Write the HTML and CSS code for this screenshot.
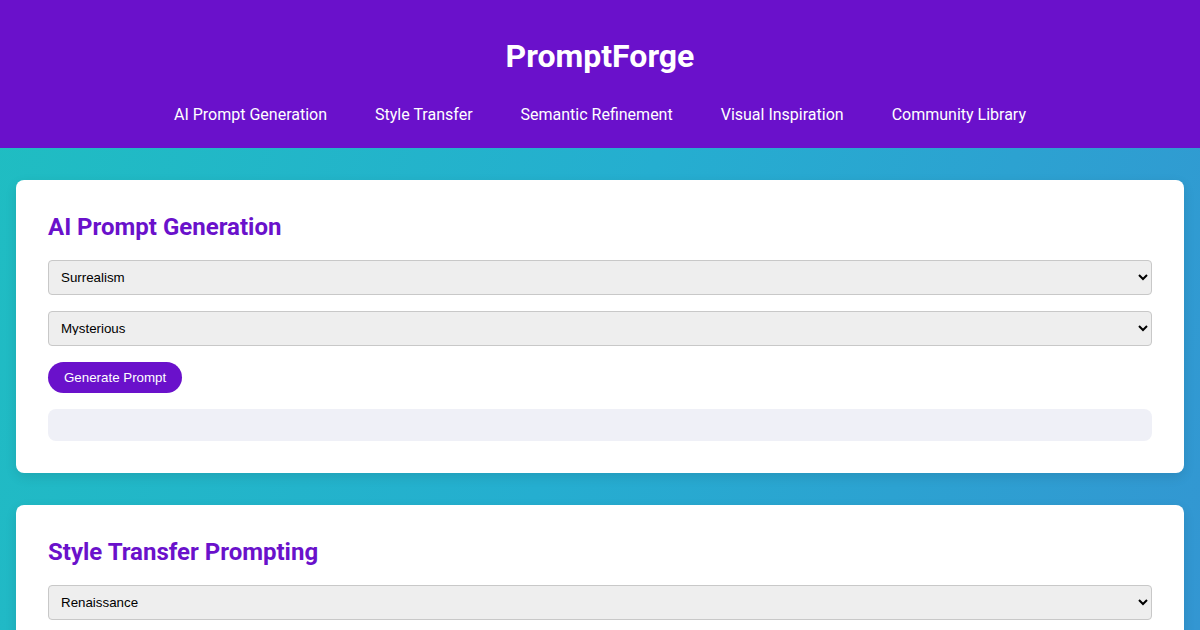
FILE: index.html
```html
<!DOCTYPE html>
<html lang="en">
<head>
<meta charset="utf-8">
<title>PromptForge</title>
<link rel="stylesheet" href="styles.css">
</head>
<body>
<header class="site-header">
  <h1 class="brand">PromptForge</h1>
  <nav class="nav">
    <a href="#gen">AI Prompt Generation</a>
    <a href="#style">Style Transfer</a>
    <a href="#sem">Semantic Refinement</a>
    <a href="#vis">Visual Inspiration</a>
    <a href="#lib">Community Library</a>
  </nav>
</header>
<main class="content">
  <section class="card" id="gen">
    <h2 class="card-title">AI Prompt Generation</h2>
    <select class="field">
      <option>Surrealism</option>
      <option>Impressionism</option>
      <option>Cyberpunk</option>
    </select>
    <select class="field">
      <option>Mysterious</option>
      <option>Joyful</option>
      <option>Melancholic</option>
    </select>
    <div><button class="btn">Generate Prompt</button></div>
    <div class="output"></div>
  </section>
  <section class="card" id="style">
    <h2 class="card-title">Style Transfer Prompting</h2>
    <select class="field">
      <option>Renaissance</option>
      <option>Baroque</option>
      <option>Pop Art</option>
    </select>
    <select class="field">
      <option>Portrait</option>
    </select>
    <div><button class="btn">Transfer Style</button></div>
    <div class="output"></div>
  </section>
</main>
</body>
</html>
```
FILE: styles.css
```css
html, body {
  margin: 0;
  padding: 0;
}
body {
  font-family: Roboto, "Liberation Sans", sans-serif;
  background: linear-gradient(110deg, #1fbec1 0%, #25aed0 50%, #3396d2 100%);
  background-attachment: fixed;
  min-height: 100vh;
}
.site-header {
  background: #6a11cb;
  color: #fff;
  text-align: center;
  padding: 16px 0;
}
.brand {
  font-size: 32px;
  font-weight: 700;
  line-height: 38px;
  margin: 21px 0 22px;
}
.nav {
  display: flex;
  justify-content: center;
  gap: 16px;
}
.nav a {
  color: #fff;
  text-decoration: none;
  font-size: 16px;
  line-height: 19px;
  padding: 8px 16px;
}
.content {
  padding: 32px 16px;
  display: flex;
  flex-direction: column;
  gap: 32px;
}
.card {
  background: #fff;
  border-radius: 8px;
  padding: 32px;
  box-shadow: 0 4px 12px rgba(0, 0, 0, 0.1);
  display: flex;
  flex-direction: column;
  gap: 16px;
}
.card-title {
  color: #6a11cb;
  font-size: 24px;
  font-weight: 700;
  line-height: 30px;
  margin: 0 0 2px;
}
.field {
  font-family: "Liberation Sans", Arial, sans-serif;
  font-size: 13.33px;
  color: #000;
  background: #eeeeee;
  border: 1px solid #c8c8c8;
  border-radius: 4px;
  padding: 8px 8px 10px;
  height: 35px;
  width: 100%;
}
.btn {
  font-family: "Liberation Sans", Arial, sans-serif;
  font-size: 13.33px;
  background: #6a11cb;
  color: #fff;
  border: none;
  border-radius: 16px;
  padding: 8px 16px;
  height: 31px;
  cursor: pointer;
}
.output {
  background: #eff0f7;
  border-radius: 8px;
  height: 32px;
}
```
